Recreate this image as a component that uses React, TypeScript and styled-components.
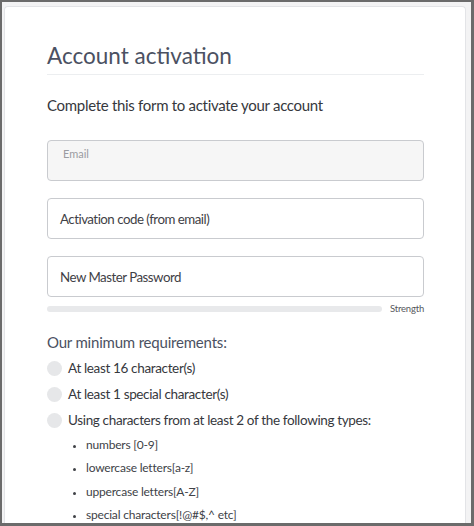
import styled, { createGlobalStyle } from "styled-components"

const GlobalStyle = createGlobalStyle`
	html, body {
		margin: 0;
		padding: 0;
		background: #6b6b6b;
	}
	* {
		box-sizing: border-box;
	}
`

const requirements = [
	"At least 16 character(s)",
	"At least 1 special character(s)",
	"Using characters from at least 2 of the following types:",
]

const types = [
	"numbers [0-9]",
	"lowercase letters[a-z]",
	"uppercase letters[A-Z]",
	"special characters[!@#$,^ etc]",
]

export default function App() {
	return (
		<>
			<GlobalStyle />
			<Frame>
				<Card>
					<Title>Account activation</Title>
					<Divider />
					<Intro>Complete this form to activate your account</Intro>
					<Fields>
						<Field $disabled>
							<SmallLabel>Email</SmallLabel>
						</Field>
						<Field>
							<Placeholder>Activation code (from email)</Placeholder>
						</Field>
						<Field>
							<Placeholder>New Master Password</Placeholder>
						</Field>
					</Fields>
					<StrengthRow>
						<StrengthBar />
						<StrengthLabel>Strength</StrengthLabel>
					</StrengthRow>
					<Heading>Our minimum requirements:</Heading>
					<RequirementList>
						{requirements.map((text) => (
							<Requirement key={text}>
								<Dot />
								<span>{text}</span>
							</Requirement>
						))}
					</RequirementList>
					<TypeList>
						{types.map((text) => (
							<li key={text}>{text}</li>
						))}
					</TypeList>
				</Card>
			</Frame>
		</>
	)
}

const Frame = styled.div`
	width: 474px;
	height: 526px;
	border-style: solid;
	border-color: #6b6b6b;
	border-width: 2px 3px 3px 2px;
	background: #f3f3f4;
	padding: 4px 5px 0 2px;
	display: flex;
	overflow: hidden;
`

const Card = styled.div`
	flex: 1;
	background: #fff;
	border: 1px solid #e3e4e7;
	border-bottom: none;
	border-radius: 4px 4px 0 0;
	padding: 35px 41px 0 42px;
	font-family: Lato, "Open Sans", sans-serif;
	color: #36383d;
`

const Title = styled.h1`
	margin: 0;
	font-size: 22.5px;
	font-weight: 400;
	line-height: 28px;
	color: #4b5162;
`

const Divider = styled.div`
	height: 1px;
	background: #eceef0;
	margin-top: 4px;
`

const Intro = styled.p`
	margin: 20px 0 0;
	font-size: 15px;
	line-height: 20px;
	letter-spacing: -0.3px;
	color: #36383d;
`

const Fields = styled.div`
	display: flex;
	flex-direction: column;
	gap: 17px;
	margin-top: 25px;
`

const Field = styled.div<{ $disabled?: boolean }>`
	height: 41px;
	border: 1px solid #c9cbcf;
	border-radius: 4px;
	background: ${(p) => (p.$disabled ? "#f6f6f6" : "#fff")};
	display: flex;
	align-items: ${(p) => (p.$disabled ? "flex-start" : "center")};
	padding: ${(p) => (p.$disabled ? "6px 15px" : "0 12px")};
`

const SmallLabel = styled.span`
	font-size: 11px;
	line-height: 14px;
	color: #9a9ca1;
`

const Placeholder = styled.span`
	font-size: 13.3px;
	letter-spacing: -0.5px;
	color: #3f4146;
`

const StrengthRow = styled.div`
	display: flex;
	align-items: center;
	gap: 8px;
	margin-top: 6px;
`

const StrengthBar = styled.div`
	flex: 1;
	height: 6px;
	border-radius: 3px;
	background: #e8e9eb;
`

const StrengthLabel = styled.span`
	font-size: 9.5px;
	letter-spacing: -0.2px;
	color: #56585d;
`

const Heading = styled.h2`
	margin: 18px 0 0;
	font-size: 15px;
	font-weight: 400;
	line-height: 20px;
	letter-spacing: -0.2px;
	color: #4b5162;
`

const RequirementList = styled.div`
	display: flex;
	flex-direction: column;
	gap: 6px;
	margin-top: 6px;
`

const Requirement = styled.div`
	display: flex;
	align-items: center;
	gap: 6px;
	font-size: 13.5px;
	line-height: 20px;
	letter-spacing: -0.35px;
	color: #36383d;
`

const Dot = styled.span`
	width: 15px;
	height: 15px;
	border-radius: 50%;
	background: #e6e7e9;
	flex-shrink: 0;
`

const TypeList = styled.ul`
	margin: 3px 0 0;
	padding-left: 39px;
	font-size: 12px;
	line-height: 23.3px;
	letter-spacing: -0.2px;
	color: #404247;

	li::marker {
		font-size: 10px;
	}
`
